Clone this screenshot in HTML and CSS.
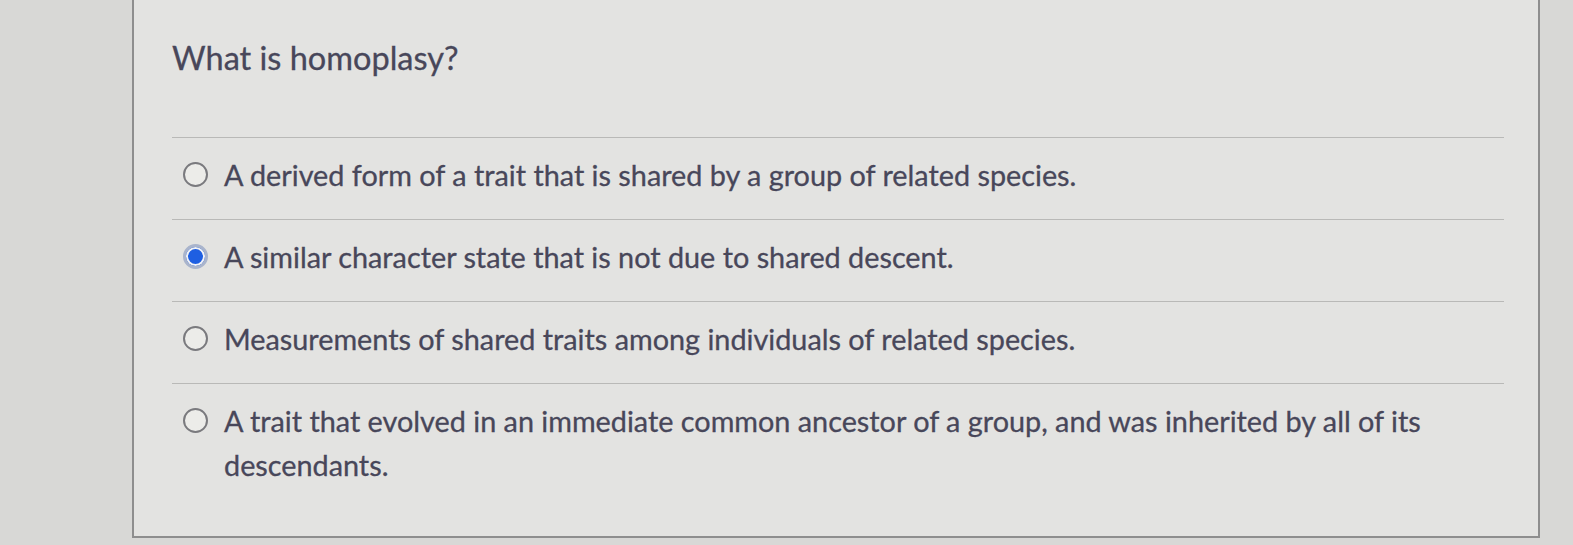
FILE: index.html
```html
<!DOCTYPE html>
<html>
<head>
<meta charset="utf-8">
<link rel="stylesheet" href="styles.css">
</head>
<body>
<div class="card">
  <h1 class="question">What is homoplasy?</h1>
  <div class="answers">
    <div class="answer">
      <span class="radio"></span>
      <span class="label">A derived form of a trait that is shared by a group of related species.</span>
    </div>
    <div class="answer">
      <span class="radio checked"></span>
      <span class="label">A similar character state that is not due to shared descent.</span>
    </div>
    <div class="answer">
      <span class="radio"></span>
      <span class="label">Measurements of shared traits among individuals of related species.</span>
    </div>
    <div class="answer last">
      <span class="radio"></span>
      <span class="label">A trait that evolved in an immediate common ancestor of a group, and was inherited by all of its descendants.</span>
    </div>
  </div>
</div>
</body>
</html>
```

FILE: styles.css
```css
html, body {
  margin: 0;
  padding: 0;
}
body {
  background: #d8d8d6;
  font-family: Lato, "Open Sans", "Liberation Sans", sans-serif;
  color: #48475a;
  width: 1573px;
  height: 545px;
  overflow: hidden;
}
.card {
  margin-left: 132px;
  margin-top: -4px;
  width: 1408px;
  height: 542px;
  box-sizing: border-box;
  background: #e3e3e1;
  border: 2px solid #8e8e8e;
  padding: 0 34px 0 38px;
}
.question {
  margin: 0;
  padding-top: 40px;
  font-size: 32.5px;
  font-weight: 400;
  line-height: 40px;
  height: 139px;
  box-sizing: border-box;
  -webkit-text-stroke: 0.3px #48475a;
}
.answers {
  display: flex;
  flex-direction: column;
}
.answer {
  display: flex;
  align-items: flex-start;
  border-top: 1px solid #b9b9b7;
  padding: 15px 0 22px 11px;
  min-height: 44px;
}
.radio {
  flex: none;
  width: 25px;
  height: 25px;
  box-sizing: border-box;
  border-radius: 50%;
  border: 2px solid #7a7a7e;
  background: #ecece9;
  margin-top: 9px;
  margin-right: 16px;
}
.radio.checked {
  border: 3px solid #a9b4cc;
  background: #1e5fe2;
  box-shadow: inset 0 0 0 2px #f2f3f6;
}
.label {
  font-size: 28.8px;
  line-height: 44px;
  padding-right: 60px;
  -webkit-text-stroke: 0.3px #48475a;
}
```
